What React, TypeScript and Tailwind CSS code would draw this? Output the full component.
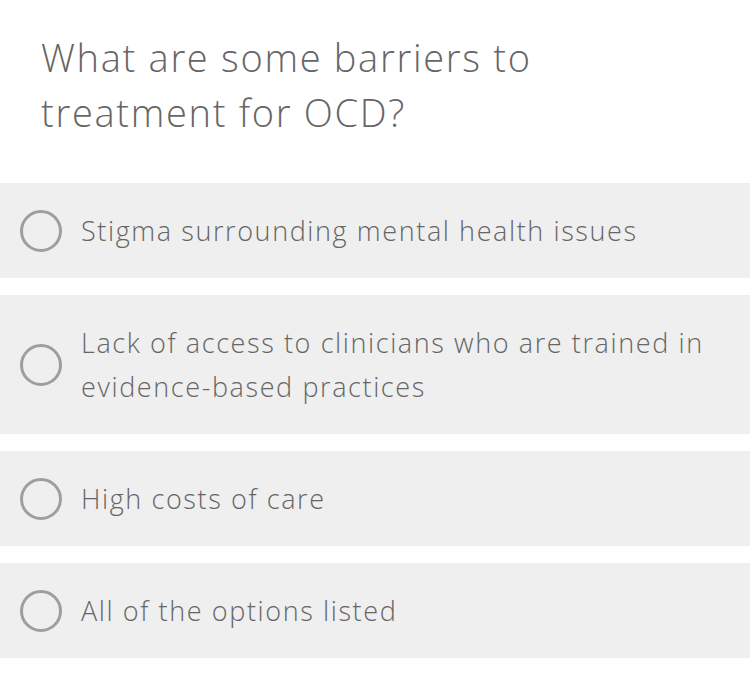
import React, { useState } from 'react';

const options: string[] = [
  'Stigma surrounding mental health issues',
  'Lack of access to clinicians who are trained in evidence-based practices',
  'High costs of care',
  'All of the options listed'
];

function App(): JSX.Element {
  const [selected, setSelected] = useState<number | null>(null);

  return (
    <div className="w-[750px] min-h-[679px] bg-white font-['Open_Sans',_'Liberation_Sans',_sans-serif] font-light text-[#666666]">
      {/* question */}
      <div className="pl-[41px] pr-[150px] pt-[30px] pb-[43px]">
        <h1 className="text-[38px] leading-[55px] font-light tracking-[1.7px]">What are some barriers to treatment for OCD?</h1>
      </div>
      {/* answers */}
      <div className="flex flex-col gap-[17px]">
        {options.map((option, idx) => (
          <div
            key={idx}
            onClick={() => setSelected(idx)}
            className="flex items-center gap-[19px] bg-[#efefef] pl-5 pr-3 py-[25.5px] cursor-pointer">
            <div className="shrink-0 w-[42px] h-[42px] rounded-full border-[3px] border-[#9e9e9e] flex items-center justify-center">
              {selected === idx && <div className="w-[22px] h-[22px] rounded-full bg-[#9e9e9e]" />}
            </div>
            <span className="text-[27px] leading-[44px] tracking-[1.6px]">{option}</span>
          </div>
        ))}
      </div>
    </div>
  );
}

export default App;
